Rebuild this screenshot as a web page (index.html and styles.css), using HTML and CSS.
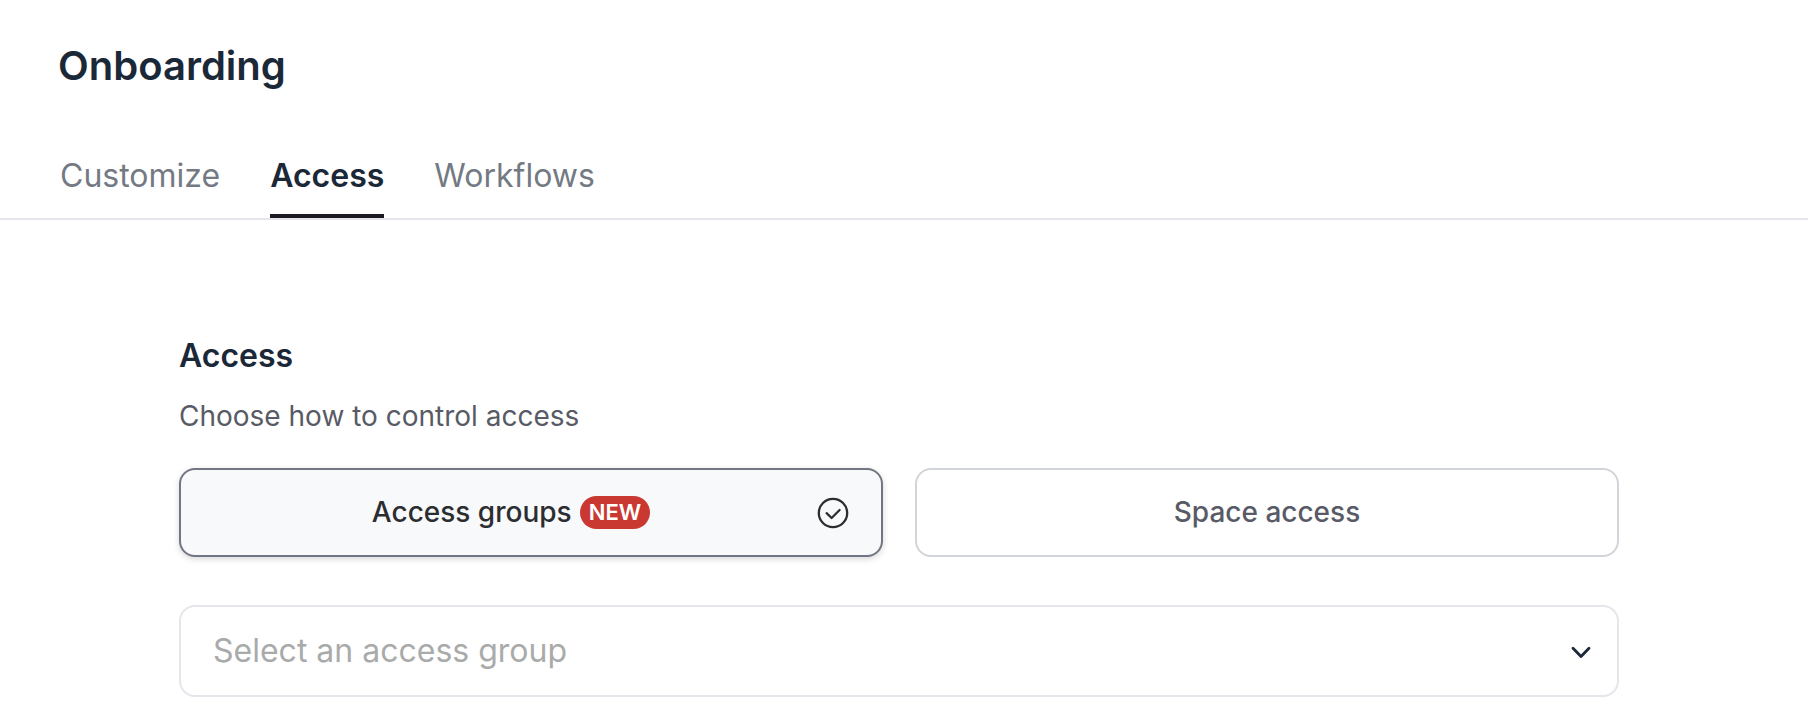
FILE: index.html
```html
<!DOCTYPE html>
<html lang="en">
<head>
<meta charset="utf-8">
<meta name="viewport" content="width=device-width, initial-scale=1">
<title>Onboarding</title>
<link rel="stylesheet" href="styles.css">
</head>
<body>
<header class="page-header">
  <h1 class="page-title">Onboarding</h1>
  <nav class="tabs" aria-label="Onboarding sections">
    <a class="tab" href="#customize">Customize</a>
    <a class="tab tab-active" href="#access" aria-current="page">Access</a>
    <a class="tab" href="#workflows">Workflows</a>
  </nav>
</header>
<main class="content">
  <section class="panel" id="access">
    <h2 class="section-title">Access</h2>
    <p class="section-text">Choose how to control access</p>
    <div class="options">
      <button class="option option-selected" type="button" aria-pressed="true">
        <span class="option-label">Access groups <span class="badge">NEW</span></span>
        <svg class="option-check" viewBox="0 0 32 32" fill="none" stroke="currentColor" stroke-width="2.3" stroke-linecap="round" stroke-linejoin="round" aria-hidden="true">
          <circle cx="16" cy="16" r="14.2"/>
          <path d="M9.6 16.2 14.6 21 22.6 13"/>
        </svg>
      </button>
      <button class="option" type="button" aria-pressed="false">
        <span class="option-label">Space access</span>
      </button>
    </div>
    <div class="select-field">
      <select class="select" aria-label="Access group">
        <option value="">Select an access group</option>
      </select>
      <svg class="select-arrow" viewBox="0 0 24 24" fill="none" stroke="currentColor" stroke-width="2.8" stroke-linecap="round" stroke-linejoin="round" aria-hidden="true">
        <path d="M4 9.2 12 17.4 20 9.2"/>
      </svg>
    </div>
  </section>
</main>
</body>
</html>
```
FILE: styles.css
```css
* {
  box-sizing: border-box;
}

body {
  margin: 0;
  background: #fff;
  color: #1b2838;
  font-family: Inter, "Liberation Sans", sans-serif;
}

.page-header {
  border-bottom: 2px solid #e5e5eb;
  padding: 42px 58px 0;
}

.page-title {
  margin: 0;
  font-size: 40px;
  font-weight: 600;
  line-height: 48px;
}

.tabs {
  display: flex;
  gap: 50px;
  padding: 66px 2px 0;
}

.tab {
  padding-bottom: 18px;
  border-bottom: 4px solid transparent;
  color: #747a84;
  font-size: 32px;
  line-height: 40px;
  text-decoration: none;
}

.tab-active {
  border-color: #1a1a20;
  color: #1b2838;
  font-weight: 600;
}

.content {
  padding: 116px 189px 26px 179px;
}

.section-title {
  margin: 0;
  font-size: 32px;
  font-weight: 600;
  line-height: 40px;
}

.section-text {
  margin: 20px 0 32px;
  color: #585b65;
  font-size: 28px;
  line-height: 40px;
}

.options {
  display: grid;
  grid-template-columns: 1fr 1fr;
  gap: 32px;
}

.option {
  display: flex;
  align-items: center;
  gap: 8px;
  padding: 26px 32px;
  border: 2px solid #d1d5da;
  border-radius: 16px;
  background: #fff;
  color: #585b65;
  font: 500 28px/33px Inter, "Liberation Sans", sans-serif;
}

.option-selected {
  border-color: #727682;
  background: #f8f9fb;
  box-shadow: 0 2px 6px rgba(0, 0, 0, 0.16);
  color: #2c2d31;
}

.option-label {
  display: flex;
  flex: 1;
  align-items: center;
  justify-content: center;
  gap: 8px;
}

.option-check {
  width: 32px;
  height: 32px;
}

.badge {
  padding: 0 9px;
  border-radius: 17px;
  background: #ca3931;
  color: #fff;
  font-size: 22px;
  font-weight: 600;
}

.select-field {
  display: grid;
  align-items: center;
  margin-top: 48px;
}

.select {
  grid-area: 1 / 1;
  width: 100%;
  padding: 24px 80px 24px 32px;
  border: 2px solid #e5e5eb;
  border-radius: 16px;
  appearance: none;
  background: #fff;
  color: #a9abaa;
  font: 400 32px/40px Inter, "Liberation Sans", sans-serif;
}

.select-arrow {
  grid-area: 1 / 1;
  justify-self: end;
  width: 24px;
  height: 24px;
  margin-right: 26px;
  pointer-events: none;
}
```
